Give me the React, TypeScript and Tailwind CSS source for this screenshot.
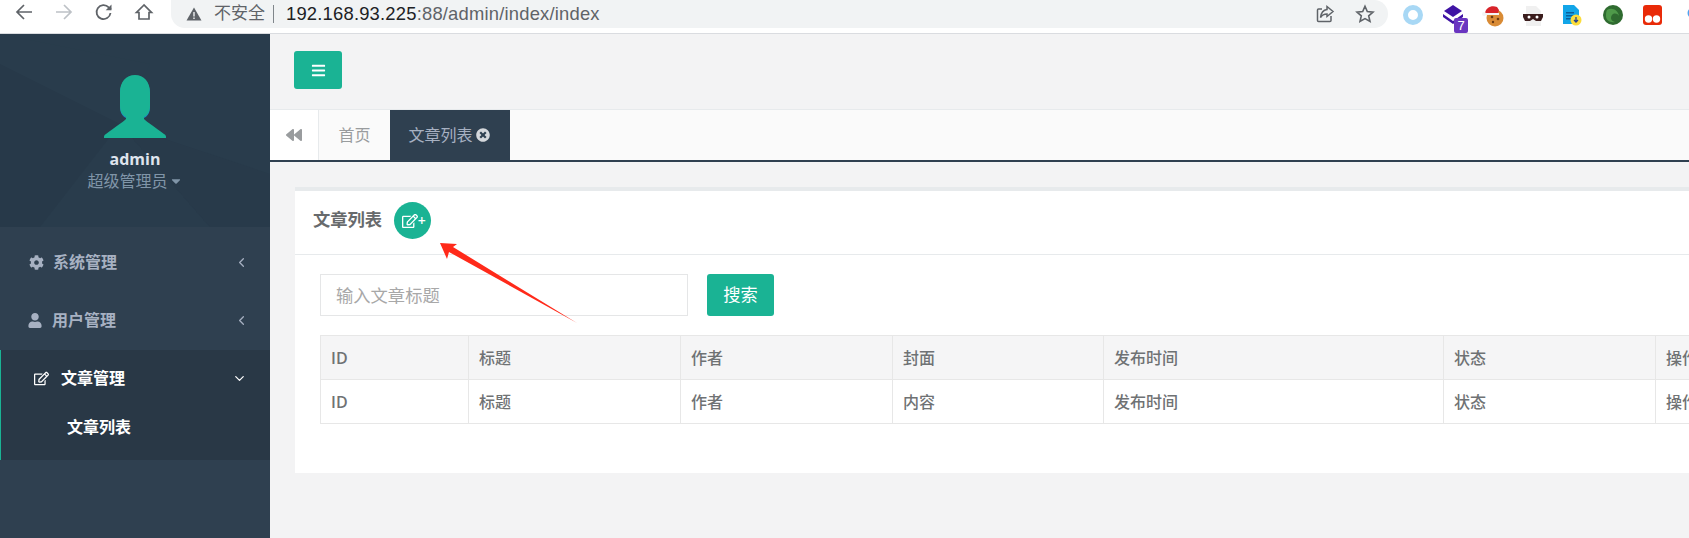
import React from "react";
import { FaBars, FaBackward, FaTimesCircle, FaCog, FaUser, FaRegEdit, FaCaretDown } from "react-icons/fa";
import { ChevronLeft, ChevronDown } from "lucide-react";

const cjk = "font-['Open_Sans','Noto_Sans_CJK_SC',sans-serif]";

function BackIcon() {
  return (
    <svg width="20" height="20" viewBox="0 0 20 20" fill="none" stroke="#5f6368" strokeWidth="1.7">
      <path d="M18 10H3M10 3l-7 7 7 7" />
    </svg>
  );
}
function ForwardIcon() {
  return (
    <svg width="20" height="20" viewBox="0 0 20 20" fill="none" stroke="#bdc1c6" strokeWidth="1.7">
      <path d="M2 10h15M10 3l7 7-7 7" />
    </svg>
  );
}
function ReloadIcon() {
  return (
    <svg width="20" height="20" viewBox="0 0 20 20" fill="none" stroke="#5f6368" strokeWidth="1.8">
      <path d="M16.5 11a7 7 0 1 1-1.8-5.7L17 7.5" />
      <path d="M17.5 2.5v5.8h-5.8" fill="#5f6368" stroke="none" />
    </svg>
  );
}
function HomeIcon() {
  return (
    <svg width="20" height="20" viewBox="0 0 20 20" fill="none" stroke="#5f6368" strokeWidth="1.7">
      <path d="M10 3 2.5 10.5H5V17h10v-6.500h2.500z" />
    </svg>
  );
}
function WarnIcon() {
  return (
    <svg width="16" height="16" viewBox="0 0 16 16">
      <path d="M8 1.500 15.500 14.500H.5z" fill="#5f6368" />
      <path d="M7.300 6h1.400v4.500H7.300zM7.300 11.500h1.400V13H7.300z" fill="#f1f3f4" />
    </svg>
  );
}
function ShareIcon() {
  return (
    <svg width="20" height="20" viewBox="0 0 20 20" fill="none" stroke="#5f6368" strokeWidth="1.5">
      <path d="M16 12v4.500a1 1 0 0 1-1 1H3.500a1 1 0 0 1-1-1V6a1 1 0 0 1 1-1H7" />
      <path d="M12 2.500 18 7.500l-6 5V10C9 10 7 11 5.500 13.500 6 9.500 8 6 12 5.500z" />
    </svg>
  );
}
function StarIcon() {
  return (
    <svg width="20" height="20" viewBox="0 0 20 20" fill="none" stroke="#5f6368" strokeWidth="1.6">
      <path d="M10 2.300 12.300 7.600l5.700.5-4.300 3.800 1.300 5.600L10 14.600 5 17.500l1.300-5.600L2 8.100l5.700-.5z" />
    </svg>
  );
}
function Ext({ children, w = 22 }: { children: React.ReactNode; w?: number }) {
  return (
    <svg width={w} height="24" viewBox={`0 0 ${w} 24`} className="shrink-0">
      {children}
    </svg>
  );
}

function Extensions() {
  return (
    <div className="flex items-center shrink-0 h-[33px] ml-[14px] gap-[18px]">
      <Ext>
        <circle cx="11" cy="10" r="7.500" fill="none" stroke="#a8d8f5" strokeWidth="5" />
      </Ext>
      <div className="relative w-[22px] h-[24px]">
        <Ext>
          <path d="M11 0 20 6 11 12 2 6z" fill="#3f13a4" />
          <path d="M1 9l10 7 10-7v3l-10 7-10-7z" fill="#3f13a4" />
        </Ext>
        <span className="absolute left-[12px] top-[13px] w-[14px] h-[15px] bg-[#6a35c0] rounded-[2px] text-white text-[13px] leading-[15px] text-center font-['Liberation_Sans',sans-serif]">
          7
        </span>
      </div>
      <Ext>
        <circle cx="13" cy="13" r="8.500" fill="#d98b35" />
        <circle cx="10" cy="12" r="1.300" fill="#6b3a12" />
        <circle cx="16" cy="14" r="1.300" fill="#6b3a12" />
        <circle cx="11" cy="17" r="1.200" fill="#6b3a12" />
        <path d="M3 8C4 2 10 0 15 2l2 3-1 3H3z" fill="#d8232a" />
        <path d="M2 8h15v2H2z" fill="#f4f4f4" />
        <circle cx="2" cy="9" r="2" fill="#f4f4f4" />
      </Ext>
      <Ext>
        <path d="M4 1h10l5 5v15H4z" fill="#f0f0f0" />
        <path d="M1 9h20v3l-2 4h-5l-3-2-3 2H3l-2-4z" fill="#3b1d1d" />
        <circle cx="7" cy="12" r="1.500" fill="#fff" />
        <circle cx="15" cy="12" r="1.500" fill="#fff" />
      </Ext>
      <div className="relative w-[22px] h-[24px]">
        <Ext>
          <path d="M1 0h11l5 5v14H1z" fill="#12a5e8" />
          <path d="M4 7h8v1.500H4zM4 10h8v1.500H4zM4 13h5v1.500H4z" fill="#0b5f9a" />
          <circle cx="14" cy="15" r="5.500" fill="#fbdc3a" />
          <path d="M14 12v5M12 15l2 2 2-2" fill="none" stroke="#25408f" strokeWidth="1.300" />
        </Ext>
      </div>
      <Ext>
        <circle cx="11" cy="10" r="10" fill="#2f6b30" />
        <path d="M5 5c5-3 11 0 12 6-2-3-5-3-7-1-2 3-1 6 3 7-5 1-9-2-9-6 0-2 0-4 1-6z" fill="#4f9a4a" />
      </Ext>
      <Ext>
        <rect x="1" y="0" width="19" height="20" rx="3" fill="#e92a08" />
        <circle cx="6.500" cy="14" r="3.700" fill="#fff" />
        <circle cx="14.500" cy="14" r="3.700" fill="#fff" />
      </Ext>
      <Ext w={14}>
        <circle cx="11" cy="8" r="4" fill="none" stroke="#4da3f0" strokeWidth="3" />
      </Ext>
    </div>
  );
}

function BrowserBar() {
  return (
    <div className="h-[34px] shrink-0 bg-white border-b border-[#dadce0] flex items-start">
      <div className="h-[33px] shrink-0 flex items-center pl-[14px]">
        <div className="flex gap-[20px] -mt-[10px]">
          <BackIcon />
          <ForwardIcon />
          <ReloadIcon />
          <HomeIcon />
        </div>
      </div>
      <div className="ml-[17px] w-[1217px] shrink-0 h-[28px] bg-[#f1f3f4] rounded-r-[14px] rounded-bl-[14px] flex items-center pl-[15px] pr-[13px]">
        <WarnIcon />
        <span className="ml-[12px] text-[17px] text-[#5f6368] font-['Liberation_Sans','Noto_Sans_CJK_SC',sans-serif]">不安全</span>
        <span className="ml-[8px] w-px h-[18px] bg-[#80868b]" />
        <span className="ml-[12px] text-[18.400px] tracking-[0.2px] text-[#5f6368] font-['Liberation_Sans',sans-serif]">
          <span className="text-[#202124]">192.168.93.225</span>:88/admin/index/index
        </span>
        <div className="ml-auto flex gap-[20px] items-center">
          <ShareIcon />
          <StarIcon />
        </div>
      </div>
      <Extensions />
    </div>
  );
}

function Avatar() {
  return (
    <svg width="64" height="64" viewBox="0 0 64 64">
      <path
        d="M32 1c9 0 15 7 15 17v14c0 5-2 9-6 11v2c3 3 11 8 20 15 2 1 2 2 2 4H1c0-2 0-3 2-4 9-7 17-12 20-15v-2c-4-2-6-6-6-11V18C17 8 23 1 32 1z"
        fill="#1ab394"
        style={{ filter: "drop-shadow(0 1px 0 #1c84c6)" }}
      />
    </svg>
  );
}

function NavItem({ icon, label }: { icon: React.ReactNode; label: string }) {
  return (
    <div className="h-[65px] pt-[5px] flex items-center pl-[28px] pr-[21px] text-[#a7b1c2]">
      <span className="w-[16px] flex justify-center text-[15px]">{icon}</span>
      <span className="ml-[9px] text-[16px] font-semibold">{label}</span>
      <ChevronLeft size={15} strokeWidth={2} className="ml-auto" />
    </div>
  );
}

function Sidebar() {
  return (
    <aside className={`w-[270px] shrink-0 bg-[#2f4050] ${cjk} flex flex-col`}>
      <div className="relative h-[193px] bg-[#293c4c] overflow-hidden flex flex-col items-center pt-[40px]">
        <svg className="absolute inset-0" width="270" height="193" viewBox="0 0 270 193">
          <path d="M0 0h270v193H210L120 90 150 30z" fill="#293c4c" />
          <path d="M0 30 120 90 40 193H0z" fill="#273949" />
          <path d="M120 90 270 140V193H210z" fill="#283a4a" />
        </svg>
        <div className="relative flex flex-col items-center">
          <Avatar />
          <div className="mt-[10px] text-[16px] leading-[22px] font-bold text-[#dfe4ed]">admin</div>
          <div className="flex items-center text-[16px] leading-[22px] text-[#8095a8]">
            超级管理员
            <FaCaretDown className="ml-[1px] text-[14px]" />
          </div>
        </div>
      </div>
      <nav>
        <NavItem icon={<FaCog />} label="系统管理" />
        <div className="h-[58px] -mt-px flex items-center pl-[28px] pr-[21px] text-[#a7b1c2]">
          <span className="w-[14px] flex justify-center text-[15px]">
            <FaUser />
          </span>
          <span className="ml-[10px] text-[16px] font-semibold">用户管理</span>
          <ChevronLeft size={15} strokeWidth={2} className="ml-auto" />
        </div>
        <div className="h-[110px] mt-px bg-[#293846] border-l-[1px] border-[#1ab394] text-white">
          <div className="h-[56px] flex items-center pl-[32px] pr-[23px]">
            <span className="w-[16px] flex justify-center text-[15px]">
              <FaRegEdit />
            </span>
            <span className="ml-[12px] text-[16px] font-semibold">文章管理</span>
            <ChevronDown size={15} strokeWidth={2} className="ml-auto" />
          </div>
          <div className="pl-[66px] pt-[10px] text-[16px] font-semibold leading-[22px]">文章列表</div>
        </div>
      </nav>
    </aside>
  );
}

function Tabs() {
  return (
    <div className="h-[53px] shrink-0 bg-[#fafafa] border-t border-[#e7eaec] border-b-2 border-b-[#2f4050] flex text-[16px]">
      <div className="w-[49px] bg-white border-r border-[#e7eaec] flex items-center justify-center text-[#999c9e] text-[16px]">
        <FaBackward />
      </div>
      <div className="w-[71px] flex items-center justify-center text-[#999c9e]">首页</div>
      <div className="w-[120px] pr-[2px] bg-[#2f4050] flex items-center justify-center text-[#a7b1c2]">
        文章列表
        <FaTimesCircle className="ml-[3px] text-[14px] text-[#d5d8dc]" />
      </div>
    </div>
  );
}

const cols = [148, 212, 212, 211, 340, 212, 212];
const heads = ["ID", "标题", "作者", "封面", "发布时间", "状态", "操作"];
const cells = ["ID", "标题", "作者", "内容", "发布时间", "状态", "操作"];

function Table() {
  return (
    <table className="mt-[19px] table-fixed border-collapse w-[1547px] text-[16px] text-[#6f7274]">
      <colgroup>
        {cols.map((w, i) => (
          <col key={i} style={{ width: w }} />
        ))}
      </colgroup>
      <thead>
        <tr className="bg-[#f5f5f6] h-[44px]">
          {heads.map((h) => (
            <th key={h} className="border border-[#e7e7e7] pl-[10px] text-left font-medium">
              {h === "ID" ? <span className="font-semibold">{h}</span> : h}
            </th>
          ))}
        </tr>
      </thead>
      <tbody>
        <tr className="h-[44px]">
          {cells.map((c) => (
            <td key={c} className="border border-[#e7e7e7] pl-[10px] font-medium">
              {c === "ID" ? <span className="font-semibold">{c}</span> : c}
            </td>
          ))}
        </tr>
      </tbody>
    </table>
  );
}

function Card() {
  return (
    <section className="ml-[25px] mt-[25px] w-[1500px] h-[286px] bg-white border-t-4 border-[#e7eaec]">
      <div className="h-[64px] border-b border-[#e7eaec] flex items-center pl-[18px]">
        <h2 className="text-[17.300px] font-bold text-[#676a6c] -mt-[5px]">文章列表</h2>
        <button className="ml-[12px] -mt-[4px] w-[37px] h-[37px] rounded-full bg-[#1ab394] text-white flex items-center justify-center text-[16px] pl-[2px]">
          <FaRegEdit />
          <span className="text-[14px] font-semibold leading-none">+</span>
        </button>
      </div>
      <div className="pl-[25px] pt-[19px]">
        <div className="flex">
          <input
            readOnly
            placeholder="输入文章标题"
            className="w-[368px] h-[42px] border border-[#e5e6e7] bg-white pl-[15px] text-[17.300px] placeholder:text-[#a8a8a8] outline-none"
          />
          <button className="ml-[19px] w-[67px] h-[42px] rounded-[3px] bg-[#1ab394] text-white text-[17.300px]">搜索</button>
        </div>
        <Table />
      </div>
    </section>
  );
}

export default function App() {
  return (
    <div className={`relative w-[1689px] h-[538px] overflow-hidden flex flex-col bg-[#f3f3f4] ${cjk}`}>
      <BrowserBar />
      <div className="flex flex-1 min-h-0">
        <Sidebar />
        <main className="flex-1 min-w-0 flex flex-col">
          <div className="h-[75px] shrink-0 pl-[24px] pt-[17px]">
            <button className="w-[48px] h-[38px] rounded-[3px] bg-[#1ab394] text-white flex items-center justify-center text-[15px]">
              <FaBars />
            </button>
          </div>
          <Tabs />
          <Card />
        </main>
      </div>
      <svg className="absolute inset-0 pointer-events-none" width="1689" height="538" viewBox="0 0 1689 538">
        <path d="M440 243 457 244 453 247 577 323 449 252 447 259z" fill="#ff2a1a" />
      </svg>
    </div>
  );
}
